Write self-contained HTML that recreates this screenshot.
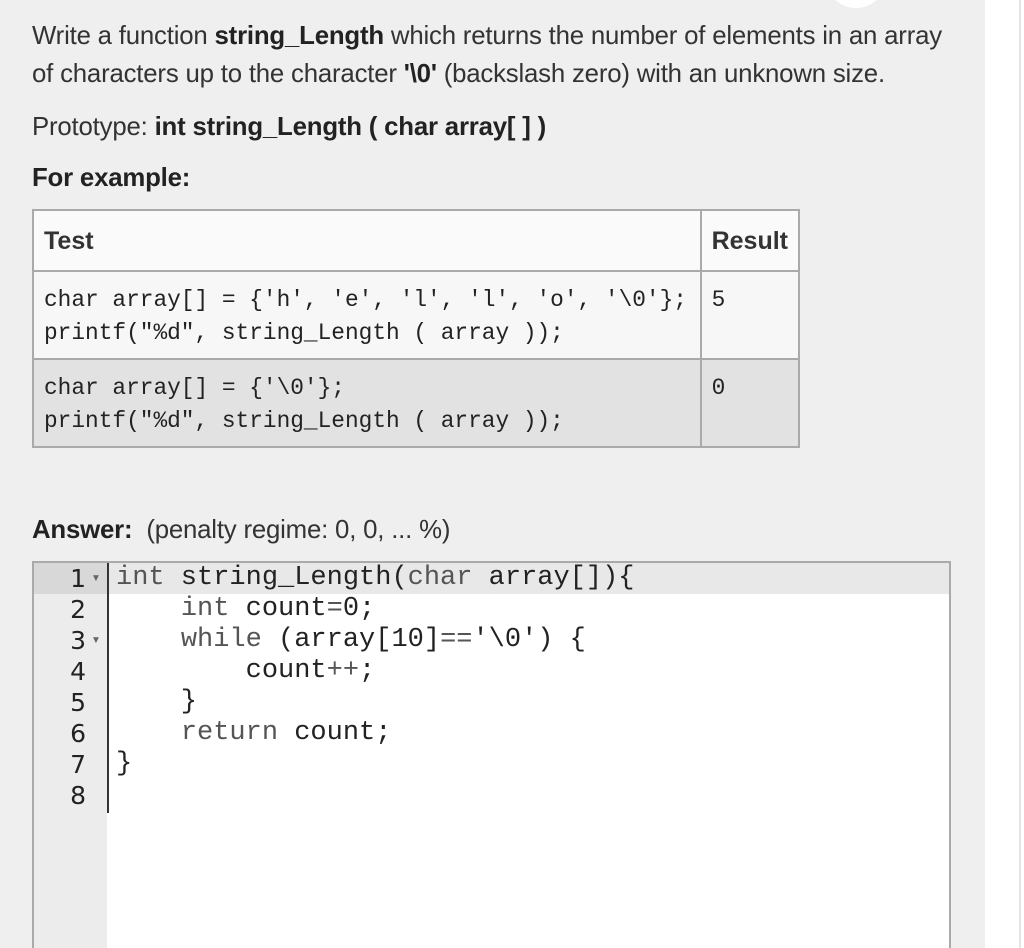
<!DOCTYPE html>
<html><head><style>
*{margin:0;padding:0;box-sizing:border-box}
html,body{width:1024px;height:948px;overflow:hidden}
body{background:#fff;position:relative;font-family:"Liberation Sans",sans-serif;color:#333}
#panel{position:absolute;left:0;top:0;width:985px;height:948px;background:#efefef}
#line{position:absolute;left:1019px;top:0;width:2px;height:948px;background:#e4e4e4}
#circ{position:absolute;left:826px;top:-50px;width:60px;height:58px;border-radius:50%;background:#fff}
.t{position:absolute;left:32px;font-size:25.8px;color:#333;white-space:nowrap;letter-spacing:-0.2px}
b{color:#222}
table{position:absolute;left:32px;top:209px;border-collapse:collapse;width:768px}
td,th{border:2px solid #aaa;text-align:left;vertical-align:top}
th{height:61px;font-size:25px;padding:16px 10px 0;background:#fafafa;color:#333}
td{font-family:"Liberation Mono",monospace;font-size:22.8px;line-height:33px;padding:12px 10px 0;height:88px;white-space:pre;color:#222}
tr.a td{background:#f7f7f7}tr.b td{background:#e2e2e2}
#ed{position:absolute;left:32px;top:561px;width:919px;height:387px;background:#fff;border:2px solid #aaa;border-bottom:none;overflow:hidden}
#gut{position:absolute;left:0;top:0;width:73px;height:400px;background:#ececec}
#gl{position:absolute;left:73px;top:0;width:2px;height:250px;background:#333}
#hl{position:absolute;left:0;top:0;width:917px;height:31px;background:#e8e8e8}
#hl2{position:absolute;left:0;top:0;width:73px;height:31px;background:#d8d8d8}
.ln{position:absolute;left:0;width:52px;text-align:right;font-family:"DejaVu Sans",sans-serif;font-size:25px;color:#222;line-height:31px}
.ar{position:absolute;left:57px;font-size:10px;color:#666}
pre{position:absolute;left:82px;top:0;font-family:"Liberation Mono",monospace;font-size:27px;line-height:31px;color:#222}
.k{color:#555}
</style></head><body>
<div id="panel"></div><div id="line"></div><div id="circ"></div>
<div class="t" style="top:22px">Write a function <b>string_Length</b> which returns the number of elements in an array</div>
<div class="t" style="top:60px">of characters up to the character <b>'\0'</b> (backslash zero) with an unknown size.</div>
<div class="t" style="top:113px">Prototype: <b>int string_Length ( char array[ ] )</b></div>
<div class="t" style="top:164px"><b>For example:</b></div>
<table>
<tr><th style="width:668px">Test</th><th>Result</th></tr>
<tr class="a"><td>char array[] = {'h', 'e', 'l', 'l', 'o', '\0'};
printf("%d", string_Length ( array ));</td><td>5</td></tr>
<tr class="b"><td>char array[] = {'\0'};
printf("%d", string_Length ( array ));</td><td>0</td></tr>
</table>
<div class="t" style="top:516px"><b>Answer:</b> &nbsp;(penalty regime: 0, 0, ... %)</div>
<div id="ed">
<div id="gut"></div><div id="hl"></div><div id="hl2"></div><div id="gl"></div>
<div class="ln" style="top:0">1</div><div class="ar" style="top:10px">▼</div>
<div class="ln" style="top:31px">2</div>
<div class="ln" style="top:62px">3</div><div class="ar" style="top:72px">▼</div>
<div class="ln" style="top:93px">4</div>
<div class="ln" style="top:124px">5</div>
<div class="ln" style="top:155px">6</div>
<div class="ln" style="top:186px">7</div>
<div class="ln" style="top:217px">8</div>
<pre><span class="k">int</span> string_Length(<span class="k">char</span> array[]){
    <span class="k">int</span> count<span class="k">=</span>0;
    <span class="k">while</span> (array[10]<span class="k">==</span>'\0') {
        count<span class="k">++</span>;
    }
    <span class="k">return</span> count;
}
</pre>
</div>
</body></html>
